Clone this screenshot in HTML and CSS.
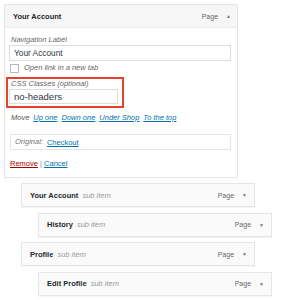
FILE: index.html
```html
<!DOCTYPE html>
<html lang="en">
<head>
  <meta charset="UTF-8" />
  <title>Menu Item Settings</title>
  <link rel="stylesheet" href="styles.css">
</head>
<body>
  <div class="menu-item open">
    <div class="item-handle">
      <span class="item-title">Your Account</span>
      <span class="item-controls">
        <span class="item-type">Page</span>
        <span class="item-arrow">&#9650;</span>
      </span>
    </div>
    <div class="item-settings">
      <label class="field-label">Navigation Label</label>
      <input class="field-input" type="text" value="Your Account">
      <div class="checkbox-row">
        <span class="checkbox"></span>
        <span class="field-label">Open link in a new tab</span>
      </div>
      <div class="highlight">
        <label class="field-label">CSS Classes (optional)</label>
        <input class="field-input big" type="text" value="no-headers">
      </div>
      <div class="move-row">
        <span class="field-label">Move</span>
        <a href="#">Up one</a>
        <a href="#">Down one</a>
        <a href="#">Under Shop</a>
        <a href="#">To the top</a>
      </div>
      <div class="original">
        <span class="field-label">Original:</span>
        <a href="#">Checkout</a>
      </div>
      <div class="actions">
        <a href="#" class="remove">Remove</a> <span class="sep">|</span> <a href="#">Cancel</a>
      </div>
    </div>
  </div>

  <div class="sub-list">
    <div class="menu-item sub">
      <div class="item-handle">
        <span class="item-title">Your Account <em>sub item</em></span>
        <span class="item-controls">
          <span class="item-type">Page</span>
          <span class="item-arrow">&#9660;</span>
        </span>
      </div>
    </div>
    <div class="menu-item sub depth-2">
      <div class="item-handle">
        <span class="item-title">History <em>sub item</em></span>
        <span class="item-controls">
          <span class="item-type">Page</span>
          <span class="item-arrow">&#9660;</span>
        </span>
      </div>
    </div>
    <div class="menu-item sub">
      <div class="item-handle">
        <span class="item-title">Profile <em>sub item</em></span>
        <span class="item-controls">
          <span class="item-type">Page</span>
          <span class="item-arrow">&#9660;</span>
        </span>
      </div>
    </div>
    <div class="menu-item sub depth-2">
      <div class="item-handle">
        <span class="item-title">Edit Profile <em>sub item</em></span>
        <span class="item-controls">
          <span class="item-type">Page</span>
          <span class="item-arrow">&#9660;</span>
        </span>
      </div>
    </div>
  </div>
</body>
</html>
```

FILE: styles.css
```css
body {
  font-family: "Liberation Sans", Arial, sans-serif;
  font-size: 7.5px;
  color: #333;
  background-color: white;
  margin: 0;
  padding: 4px;
}
.menu-item {
  width: 234px;
  box-sizing: border-box;
  border: 1px solid #e5e5e5;
  background-color: #fafafa;
}
.item-handle {
  display: flex;
  justify-content: space-between;
  align-items: center;
  height: 22px;
  padding: 0 6px 0 8px;
}
.open .item-handle {
  background-color: #f6f6f6;
  border-bottom: 1px solid #ececec;
}
.item-title {
  font-weight: bold;
  color: #23282d;
}
.item-title em {
  font-weight: normal;
  color: #999;
  margin-left: 2px;
}
.item-controls {
  display: flex;
  align-items: center;
  gap: 8px;
}
.item-type {
  color: #666;
  font-size: 7px;
}
.item-arrow {
  color: #777;
  font-size: 5px;
}
.item-settings {
  background-color: white;
  padding: 7px 6px 8px 5px;
}
.field-label {
  display: block;
  font-style: italic;
  color: #666;
  line-height: 10px;
  padding-left: 1px;
}
.field-input {
  display: block;
  box-sizing: border-box;
  width: 222px;
  height: 16px;
  margin: 0 0 0 -1px;
  padding: 0 4px;
  border: 1px solid #ddd;
  font-family: inherit;
  font-size: 8.3px;
  color: #32373c;
  background-color: white;
}
.checkbox-row {
  display: flex;
  align-items: center;
  gap: 4px;
  margin-top: 2px;
  height: 10px;
}
.checkbox {
  width: 9px;
  height: 9px;
  box-sizing: border-box;
  border: 1px solid #b4b9be;
  background-color: white;
}
.highlight {
  width: 118px;
  box-sizing: border-box;
  margin: 4px 0 0 -4px;
  padding: 0 4px 2px 1px;
  border: 2px solid #e4412f;
}
.highlight .field-label {
  padding-left: 2px;
}
.field-input.big {
  width: 109px;
  height: 15px;
  margin-left: 0;
  font-size: 9.5px;
}
.move-row {
  display: flex;
  gap: 4px;
  margin-top: 5px;
  line-height: 10px;
}
.move-row .field-label {
  color: #555;
}
a {
  color: #0073aa;
}
.move-row a {
  font-style: italic;
}
.original {
  display: flex;
  align-items: center;
  gap: 4px;
  height: 16px;
  box-sizing: border-box;
  margin-top: 11px;
  padding-left: 3px;
  border: 1px solid #e5e5e5;
}
.original .field-label {
  color: #777;
}
.actions {
  margin-top: 9px;
  line-height: 10px;
}
.actions .remove {
  color: #a00;
}
.sep {
  color: #888;
}
.sub-list {
  display: flex;
  flex-direction: column;
  gap: 5.5px;
  margin-top: 5px;
  padding-left: 17px;
}
.sub {
  box-shadow: 0 1px 1px rgba(0,0,0,0.04);
}
.sub .item-handle {
  padding: 0 7px 0 8px;
}
.depth-2 {
  margin-left: 17px;
}
```
